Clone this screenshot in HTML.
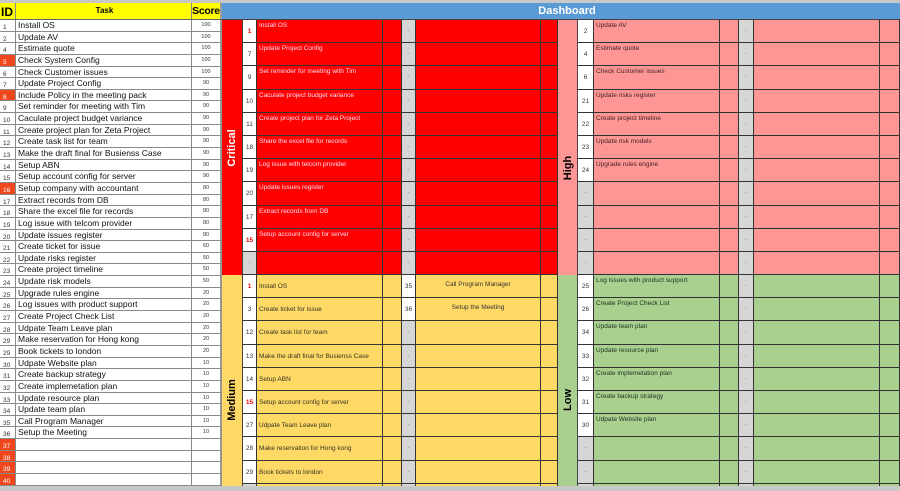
<!DOCTYPE html>
<html><head><meta charset="utf-8"><style>
*{margin:0;padding:0;box-sizing:border-box}
body{width:900px;height:491px;overflow:hidden;background:#c8c8c8;font-family:"Liberation Sans",Arial,sans-serif;position:relative}
.lt{position:absolute;left:0;top:3px;width:222px;background:#fff}
.lr{display:flex;height:11.65px;border-bottom:1px solid #8a8a8a}
.lr div{border-right:1px solid #8a8a8a;overflow:hidden;white-space:nowrap}
.lr .i{width:16px;font-size:6.5px;color:#333;padding:4px 0 0 3px}
.lr .i.r{background:#f0461c;color:#fff}
.lr .t{width:176px;font-size:8.5px;color:#111;padding:0 0 0 2px;line-height:10px}
.lr .s{width:30px;font-size:5.5px;color:#333;text-align:center;line-height:11px;border-right:2px solid #999!important}
.hd{height:17px;background:#ffff00;font-weight:bold;border-bottom:1px solid #666}
.hd .i{font-size:12px;color:#000;padding:2px 0 0 1px}
.hd .t{font-size:8px;text-align:center;line-height:16px;color:#000}
.lr.hd .s{font-size:10.5px;color:#000;line-height:16px;font-weight:bold;text-align:center;letter-spacing:-0.3px}
.dh{position:absolute;left:222px;top:3px;width:678px;height:17px;background:#5b9bd5;color:#fff;font-weight:bold;font-size:11px;text-align:center;line-height:17px;padding-left:12px;border-bottom:1px solid #444}
.sec{position:absolute;display:flex}
.lab{position:relative;border-right:1px solid #444}
.lab span{position:absolute;left:50%;transform:translate(-50%,-50%) rotate(-90deg);font-weight:bold;font-size:11px;white-space:nowrap}
.row{display:flex;height:23.2px;border-bottom:1px solid #333}
.row div{border-right:1px solid #333;overflow:hidden;white-space:nowrap}
.id{background:#fff;font-size:6.5px;color:#333;text-align:center;line-height:23px}
.id.red{color:#e00;font-weight:bold}
.g{background:#d6d6d6;font-size:6px;color:#d66;text-align:center;line-height:23px}
.tx{font-size:6.5px;padding:2px 0 0 2px}
.crit .row{background:#ff0000}.crit .tx{color:#fde}
.high .row{background:#ff9696}.high .tx{color:#422}
.med .row{background:#ffd966}.med .tx{color:#332;line-height:19px}
.low .row{background:#a9d08e}.low .tx{color:#232}
.ct{font-size:6.5px;text-align:center;line-height:20px;color:#333}
</style></head><body>
<div class="lt">
<div class="lr hd"><div class="i">ID</div><div class="t">Task</div><div class="s">Score</div></div>
<div class="lr"><div class="i">1</div><div class="t">Install OS</div><div class="s">100</div></div>
<div class="lr"><div class="i">2</div><div class="t">Update AV</div><div class="s">100</div></div>
<div class="lr"><div class="i">4</div><div class="t">Estimate quote</div><div class="s">100</div></div>
<div class="lr"><div class="i r">5</div><div class="t">Check System Config</div><div class="s">100</div></div>
<div class="lr"><div class="i">6</div><div class="t">Check Customer issues</div><div class="s">100</div></div>
<div class="lr"><div class="i">7</div><div class="t">Update Project Config</div><div class="s">90</div></div>
<div class="lr"><div class="i r">8</div><div class="t">Include Policy in the meeting pack</div><div class="s">90</div></div>
<div class="lr"><div class="i">9</div><div class="t">Set reminder for meeting with Tim</div><div class="s">90</div></div>
<div class="lr"><div class="i">10</div><div class="t">Caculate project budget variance</div><div class="s">90</div></div>
<div class="lr"><div class="i">11</div><div class="t">Create project plan for Zeta Project</div><div class="s">90</div></div>
<div class="lr"><div class="i">12</div><div class="t">Create task list for team</div><div class="s">90</div></div>
<div class="lr"><div class="i">13</div><div class="t">Make the draft final for Busienss Case</div><div class="s">90</div></div>
<div class="lr"><div class="i">14</div><div class="t">Setup ABN</div><div class="s">90</div></div>
<div class="lr"><div class="i">15</div><div class="t">Setup account config for server</div><div class="s">90</div></div>
<div class="lr"><div class="i r">16</div><div class="t">Setup company with accountant</div><div class="s">80</div></div>
<div class="lr"><div class="i">17</div><div class="t">Extract records from DB</div><div class="s">80</div></div>
<div class="lr"><div class="i">18</div><div class="t">Share the excel file for records</div><div class="s">80</div></div>
<div class="lr"><div class="i">19</div><div class="t">Log issue with telcom provider</div><div class="s">80</div></div>
<div class="lr"><div class="i">20</div><div class="t">Update issues register</div><div class="s">80</div></div>
<div class="lr"><div class="i">21</div><div class="t">Create ticket for issue</div><div class="s">60</div></div>
<div class="lr"><div class="i">22</div><div class="t">Update risks register</div><div class="s">50</div></div>
<div class="lr"><div class="i">23</div><div class="t">Create project timeline</div><div class="s">50</div></div>
<div class="lr"><div class="i">24</div><div class="t">Update risk models</div><div class="s">50</div></div>
<div class="lr"><div class="i">25</div><div class="t">Upgrade rules engine</div><div class="s">20</div></div>
<div class="lr"><div class="i">26</div><div class="t">Log issues with product support</div><div class="s">20</div></div>
<div class="lr"><div class="i">27</div><div class="t">Create Project Check List</div><div class="s">20</div></div>
<div class="lr"><div class="i">28</div><div class="t">Udpate Team Leave plan</div><div class="s">20</div></div>
<div class="lr"><div class="i">29</div><div class="t">Make reservation for Hong kong</div><div class="s">20</div></div>
<div class="lr"><div class="i">29</div><div class="t">Book tickets to london</div><div class="s">20</div></div>
<div class="lr"><div class="i">30</div><div class="t">Udpate Website plan</div><div class="s">10</div></div>
<div class="lr"><div class="i">31</div><div class="t">Create backup strategy</div><div class="s">10</div></div>
<div class="lr"><div class="i">32</div><div class="t">Create implemetation plan</div><div class="s">10</div></div>
<div class="lr"><div class="i">33</div><div class="t">Update resource plan</div><div class="s">10</div></div>
<div class="lr"><div class="i">34</div><div class="t">Update team plan</div><div class="s">10</div></div>
<div class="lr"><div class="i">35</div><div class="t">Call Program Manager</div><div class="s">10</div></div>
<div class="lr"><div class="i">36</div><div class="t">Setup the Meeting</div><div class="s">10</div></div>
<div class="lr"><div class="i r">37</div><div class="t"></div><div class="s"></div></div>
<div class="lr"><div class="i r">38</div><div class="t"></div><div class="s"></div></div>
<div class="lr"><div class="i r">39</div><div class="t"></div><div class="s"></div></div>
<div class="lr"><div class="i r">40</div><div class="t"></div><div class="s"></div></div>
</div>
<div class="dh">Dashboard</div>

<!-- Critical -->
<div class="sec crit" style="left:222px;top:20px;width:336px;height:255px">
<div class="lab" style="width:21px;background:#f00"><span style="top:128px;color:#fff">Critical</span></div>
<div style="width:315px">
<div class="row"><div class="id red" style="width:14px">1</div><div class="tx" style="width:126px">Install OS</div><div style="width:19px"></div><div class="g" style="width:14px">-</div><div style="width:125px"></div><div style="width:17px"></div></div>
<div class="row"><div class="id" style="width:14px">7</div><div class="tx" style="width:126px">Update Project Config</div><div style="width:19px"></div><div class="g" style="width:14px">-</div><div style="width:125px"></div><div style="width:17px"></div></div>
<div class="row"><div class="id" style="width:14px">9</div><div class="tx" style="width:126px">Set reminder for meeting with Tim</div><div style="width:19px"></div><div class="g" style="width:14px">-</div><div style="width:125px"></div><div style="width:17px"></div></div>
<div class="row"><div class="id" style="width:14px">10</div><div class="tx" style="width:126px">Caculate project budget variance</div><div style="width:19px"></div><div class="g" style="width:14px">-</div><div style="width:125px"></div><div style="width:17px"></div></div>
<div class="row"><div class="id" style="width:14px">11</div><div class="tx" style="width:126px">Create project plan for Zeta Project</div><div style="width:19px"></div><div class="g" style="width:14px">-</div><div style="width:125px"></div><div style="width:17px"></div></div>
<div class="row"><div class="id" style="width:14px">18</div><div class="tx" style="width:126px">Share the excel file for records</div><div style="width:19px"></div><div class="g" style="width:14px">-</div><div style="width:125px"></div><div style="width:17px"></div></div>
<div class="row"><div class="id" style="width:14px">19</div><div class="tx" style="width:126px">Log issue with telcom provider</div><div style="width:19px"></div><div class="g" style="width:14px">-</div><div style="width:125px"></div><div style="width:17px"></div></div>
<div class="row"><div class="id" style="width:14px">20</div><div class="tx" style="width:126px">Update issues register</div><div style="width:19px"></div><div class="g" style="width:14px">-</div><div style="width:125px"></div><div style="width:17px"></div></div>
<div class="row"><div class="id" style="width:14px">17</div><div class="tx" style="width:126px">Extract records from DB</div><div style="width:19px"></div><div class="g" style="width:14px">-</div><div style="width:125px"></div><div style="width:17px"></div></div>
<div class="row"><div class="id red" style="width:14px">15</div><div class="tx" style="width:126px">Setup account config for server</div><div style="width:19px"></div><div class="g" style="width:14px">-</div><div style="width:125px"></div><div style="width:17px"></div></div>
<div class="row"><div class="g" style="width:14px">-</div><div class="tx" style="width:126px"></div><div style="width:19px"></div><div class="g" style="width:14px">-</div><div style="width:125px"></div><div style="width:17px"></div></div>
</div></div>

<!-- High -->
<div class="sec high" style="left:558px;top:20px;width:342px;height:255px">
<div class="lab" style="width:20px;background:#ff9696"><span style="top:148px;color:#000">High</span></div>
<div style="width:322px">
<div class="row"><div class="id" style="width:16px">2</div><div class="tx" style="width:126px">Update AV</div><div style="width:19px"></div><div class="g" style="width:15px">-</div><div style="width:126px"></div><div style="width:20px"></div></div>
<div class="row"><div class="id" style="width:16px">4</div><div class="tx" style="width:126px">Estimate quote</div><div style="width:19px"></div><div class="g" style="width:15px">-</div><div style="width:126px"></div><div style="width:20px"></div></div>
<div class="row"><div class="id" style="width:16px">6</div><div class="tx" style="width:126px">Check Customer issues</div><div style="width:19px"></div><div class="g" style="width:15px">-</div><div style="width:126px"></div><div style="width:20px"></div></div>
<div class="row"><div class="id" style="width:16px">21</div><div class="tx" style="width:126px">Update risks register</div><div style="width:19px"></div><div class="g" style="width:15px">-</div><div style="width:126px"></div><div style="width:20px"></div></div>
<div class="row"><div class="id" style="width:16px">22</div><div class="tx" style="width:126px">Create project timeline</div><div style="width:19px"></div><div class="g" style="width:15px">-</div><div style="width:126px"></div><div style="width:20px"></div></div>
<div class="row"><div class="id" style="width:16px">23</div><div class="tx" style="width:126px">Update risk models</div><div style="width:19px"></div><div class="g" style="width:15px">-</div><div style="width:126px"></div><div style="width:20px"></div></div>
<div class="row"><div class="id" style="width:16px">24</div><div class="tx" style="width:126px">Upgrade rules engine</div><div style="width:19px"></div><div class="g" style="width:15px">-</div><div style="width:126px"></div><div style="width:20px"></div></div>
<div class="row"><div class="g" style="width:16px">-</div><div class="tx" style="width:126px"></div><div style="width:19px"></div><div class="g" style="width:15px">-</div><div style="width:126px"></div><div style="width:20px"></div></div>
<div class="row"><div class="g" style="width:16px">-</div><div class="tx" style="width:126px"></div><div style="width:19px"></div><div class="g" style="width:15px">-</div><div style="width:126px"></div><div style="width:20px"></div></div>
<div class="row"><div class="g" style="width:16px">-</div><div class="tx" style="width:126px"></div><div style="width:19px"></div><div class="g" style="width:15px">-</div><div style="width:126px"></div><div style="width:20px"></div></div>
<div class="row"><div class="g" style="width:16px">-</div><div class="tx" style="width:126px"></div><div style="width:19px"></div><div class="g" style="width:15px">-</div><div style="width:126px"></div><div style="width:20px"></div></div>
</div></div>

<!-- Medium -->
<div class="sec med" style="left:222px;top:275px;width:336px;height:211px;overflow:hidden">
<div class="lab" style="width:21px;background:#ffd966"><span style="top:125px;color:#000">Medium</span></div>
<div style="width:315px">
<div class="row"><div class="id red" style="width:14px">1</div><div class="tx" style="width:126px">Install OS</div><div style="width:19px"></div><div class="id" style="width:14px">35</div><div class="ct" style="width:125px">Call Program Manager</div><div style="width:17px"></div></div>
<div class="row"><div class="id" style="width:14px">3</div><div class="tx" style="width:126px">Create ticket for issue</div><div style="width:19px"></div><div class="id" style="width:14px">36</div><div class="ct" style="width:125px">Setup the Meeting</div><div style="width:17px"></div></div>
<div class="row"><div class="id" style="width:14px">12</div><div class="tx" style="width:126px">Create task list for team</div><div style="width:19px"></div><div class="g" style="width:14px">-</div><div style="width:125px"></div><div style="width:17px"></div></div>
<div class="row"><div class="id" style="width:14px">13</div><div class="tx" style="width:126px">Make the draft final for Busienss Case</div><div style="width:19px"></div><div class="g" style="width:14px">-</div><div style="width:125px"></div><div style="width:17px"></div></div>
<div class="row"><div class="id" style="width:14px">14</div><div class="tx" style="width:126px">Setup ABN</div><div style="width:19px"></div><div class="g" style="width:14px">-</div><div style="width:125px"></div><div style="width:17px"></div></div>
<div class="row"><div class="id red" style="width:14px">15</div><div class="tx" style="width:126px">Setup account config for server</div><div style="width:19px"></div><div class="g" style="width:14px">-</div><div style="width:125px"></div><div style="width:17px"></div></div>
<div class="row"><div class="id" style="width:14px">27</div><div class="tx" style="width:126px">Udpate Team Leave plan</div><div style="width:19px"></div><div class="g" style="width:14px">-</div><div style="width:125px"></div><div style="width:17px"></div></div>
<div class="row"><div class="id" style="width:14px">28</div><div class="tx" style="width:126px">Make reservation for Hong kong</div><div style="width:19px"></div><div class="g" style="width:14px">-</div><div style="width:125px"></div><div style="width:17px"></div></div>
<div class="row"><div class="id" style="width:14px">29</div><div class="tx" style="width:126px">Book tickets to london</div><div style="width:19px"></div><div class="g" style="width:14px">-</div><div style="width:125px"></div><div style="width:17px"></div></div>
<div class="row"><div class="g" style="width:14px">-</div><div class="tx" style="width:126px"></div><div style="width:19px"></div><div class="g" style="width:14px">-</div><div style="width:125px"></div><div style="width:17px"></div></div>
</div></div>

<!-- Low -->
<div class="sec low" style="left:558px;top:275px;width:342px;height:211px;overflow:hidden">
<div class="lab" style="width:20px;background:#a9d08e"><span style="top:125px;color:#000">Low</span></div>
<div style="width:322px">
<div class="row"><div class="id" style="width:16px">25</div><div class="tx" style="width:126px">Log issues with product support</div><div style="width:19px"></div><div class="g" style="width:15px">-</div><div style="width:126px"></div><div style="width:20px"></div></div>
<div class="row"><div class="id" style="width:16px">26</div><div class="tx" style="width:126px">Create Project Check List</div><div style="width:19px"></div><div class="g" style="width:15px">-</div><div style="width:126px"></div><div style="width:20px"></div></div>
<div class="row"><div class="id" style="width:16px">34</div><div class="tx" style="width:126px">Update team plan</div><div style="width:19px"></div><div class="g" style="width:15px">-</div><div style="width:126px"></div><div style="width:20px"></div></div>
<div class="row"><div class="id" style="width:16px">33</div><div class="tx" style="width:126px">Update resource plan</div><div style="width:19px"></div><div class="g" style="width:15px">-</div><div style="width:126px"></div><div style="width:20px"></div></div>
<div class="row"><div class="id" style="width:16px">32</div><div class="tx" style="width:126px">Create implemetation plan</div><div style="width:19px"></div><div class="g" style="width:15px">-</div><div style="width:126px"></div><div style="width:20px"></div></div>
<div class="row"><div class="id" style="width:16px">31</div><div class="tx" style="width:126px">Create backup strategy</div><div style="width:19px"></div><div class="g" style="width:15px">-</div><div style="width:126px"></div><div style="width:20px"></div></div>
<div class="row"><div class="id" style="width:16px">30</div><div class="tx" style="width:126px">Udpate Website plan</div><div style="width:19px"></div><div class="g" style="width:15px">-</div><div style="width:126px"></div><div style="width:20px"></div></div>
<div class="row"><div class="g" style="width:16px">-</div><div class="tx" style="width:126px"></div><div style="width:19px"></div><div class="g" style="width:15px">-</div><div style="width:126px"></div><div style="width:20px"></div></div>
<div class="row"><div class="g" style="width:16px">-</div><div class="tx" style="width:126px"></div><div style="width:19px"></div><div class="g" style="width:15px">-</div><div style="width:126px"></div><div style="width:20px"></div></div>
<div class="row"><div class="g" style="width:16px">-</div><div class="tx" style="width:126px"></div><div style="width:19px"></div><div class="g" style="width:15px">-</div><div style="width:126px"></div><div style="width:20px"></div></div>
</div></div>
</body></html>
